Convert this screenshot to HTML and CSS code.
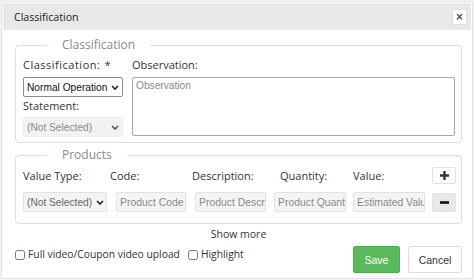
FILE: index.html
```html
<!DOCTYPE html>
<html lang="en">
<head>
  <meta charset="UTF-8">
  <title>Classification</title>
  <link rel="stylesheet" href="styles.css">
</head>
<body>
  <div class="dialog">
    <div class="dialog-header">
      <span class="dialog-title">Classification</span>
      <button class="close-btn">&times;</button>
    </div>
    <div class="dialog-body">
      <fieldset class="group">
        <legend>Classification</legend>
        <div class="class-grid">
          <div class="col-left">
            <label class="lbl lbl-required">Classification:<span class="req">*</span></label>
            <div class="select-wrap">
              <select class="field"><option>Normal Operation</option></select>
              <svg class="chev" width="8" height="5" viewBox="0 0 8 5"><path d="M1 1l3 3 3-3" fill="none" stroke="#222" stroke-width="1.6"/></svg>
            </div>
            <label class="lbl lbl-second">Statement:</label>
            <div class="select-wrap">
              <select class="field" disabled><option>(Not Selected)</option></select>
              <svg class="chev" width="8" height="5" viewBox="0 0 8 5"><path d="M1 1l3 3 3-3" fill="none" stroke="#555" stroke-width="1.6"/></svg>
            </div>
          </div>
          <div class="col-right">
            <label class="lbl">Observation:</label>
            <textarea class="obs" placeholder="Observation"></textarea>
          </div>
        </div>
      </fieldset>

      <fieldset class="group products">
        <legend>Products</legend>
        <div class="prod-grid">
          <span class="lbl">Value Type:</span>
          <span class="lbl">Code:</span>
          <span class="lbl">Description:</span>
          <span class="lbl lbl-qty">Quantity:</span>
          <span class="lbl">Value:</span>
          <button class="icon-btn plus">
            <svg width="9" height="9" viewBox="0 0 9 9"><path d="M4.5 0v9M0 4.5h9" stroke="#333" stroke-width="2.4"/></svg>
          </button>

          <div class="select-wrap type-wrap">
            <select class="field soft"><option>(Not Selected)</option></select>
            <svg class="chev" width="8" height="5" viewBox="0 0 8 5"><path d="M1 1l3 3 3-3" fill="none" stroke="#222" stroke-width="1.6"/></svg>
          </div>
          <input class="field soft in-code" placeholder="Product Code">
          <input class="field soft in-desc" placeholder="Product Description">
          <input class="field soft in-qty" placeholder="Product Quantity">
          <input class="field soft in-val" placeholder="Estimated Value">
          <button class="icon-btn minus">
            <svg width="9" height="9" viewBox="0 0 9 9"><path d="M0 4.5h9" stroke="#111" stroke-width="2.6"/></svg>
          </button>
        </div>
      </fieldset>

      <div class="show-more">Show more</div>

      <div class="footer">
        <label class="check"><input type="checkbox">Full video/Coupon video upload</label>
        <label class="check"><input type="checkbox">Highlight</label>
        <div class="actions">
          <button class="btn save">Save</button>
          <button class="btn cancel">Cancel</button>
        </div>
      </div>
    </div>
  </div>
</body>
</html>
```

FILE: styles.css
```css
body { margin: 0; background: #f4f4f4; font-family: "Open Sans", sans-serif; color: #333; }
.dialog { margin: 1px; height: 278px; box-sizing: border-box; background: #fff; border: 1px solid #e4e4e4; padding: 1px; }

.dialog-header { height: 27px; background: #e8e8e8; display: flex; align-items: center; justify-content: space-between; padding: 0 4px 0 11px; }
.dialog-title { font-size: 10.6px; color: #222; }
.close-btn { width: 15px; height: 16px; margin-top: 1px; padding: 0; background: #fff; border: 1px solid #ddd; border-radius: 2px; font-family: "Liberation Sans", sans-serif; font-size: 12px; font-weight: bold; line-height: 13px; color: #555; }

.dialog-body { padding: 7px 9px 0 12px; }

.group { margin: 0; padding: 4px 6px 5px 7px; border: 1px solid #ddd; border-radius: 4px; min-width: 0; }
.group legend { margin-left: 24px; padding: 0 15px; font-size: 12px; line-height: 16px; color: #8a8a8a; }
.products { margin-top: 4px; padding-bottom: 11px; }

.lbl { display: block; font-size: 11px; line-height: 15px; color: #333; margin-bottom: 5px; }
.lbl-required { letter-spacing: 0.5px; }
.req { margin-left: 4px; }
.lbl-second { margin-top: 1px; margin-bottom: 4px; }

.class-grid { display: grid; grid-template-columns: 100px 1fr; column-gap: 9px; }

.select-wrap { position: relative; }
.chev { position: absolute; right: 4px; top: 8px; pointer-events: none; }

.field { display: block; box-sizing: border-box; height: 20px; width: 100%; margin: 0; padding: 0 0 0 3px; font-family: "Liberation Sans", Arial, sans-serif; font-size: 10.2px; color: #111; background: #fff; border: 1px solid #8c8c8c; border-radius: 2px; appearance: none; -webkit-appearance: none; outline: none; }
.field::placeholder { color: #8a8a8a; }
select.field:disabled { background: #f2f2f2; border-color: #ececec; color: #8a8a8a; opacity: 1; }

.obs { display: block; box-sizing: border-box; width: 100%; height: 59px; margin: 0; padding: 2px 3px; resize: none; font-family: "Liberation Sans", Arial, sans-serif; font-size: 10.2px; border: 1px solid #a8a8a8; border-radius: 2px; }
.obs::placeholder { color: #8a8a8a; }

.prod-grid { display: grid; grid-template-columns: 87px 82px 82px 79px 78px 24px; grid-template-rows: 17px 20px; row-gap: 8px; align-items: center; }
.prod-grid .lbl { margin: 0; }
.prod-grid .lbl-qty { margin-left: 6px; }
.field.soft { background: #f4f4f4; border-color: #e2e2e2; color: #666; }
input.field { font-size: 10.4px; }
.type-wrap { width: 84px; }
.type-wrap .chev { right: 3px; }
.in-code { width: 70px; margin-left: 6px; }
.in-desc { width: 71px; margin-left: 3px; }
.in-qty { width: 72px; }
.in-val { width: 72px; }

.icon-btn { box-sizing: border-box; width: 24px; margin: 0 0 0 1px; padding: 0; border: 1px solid #e0e0e0; border-radius: 2px; display: flex; align-items: center; justify-content: center; }
.plus { height: 17px; background: #fff; }
.minus { height: 19px; background: #e8e8e8; }

.show-more { text-align: center; font-size: 10.5px; line-height: 15px; color: #333; margin-top: 3px; }

.footer { display: flex; align-items: flex-start; }
.check { display: flex; align-items: center; gap: 3px; font-size: 10.3px; line-height: 15px; color: #333; margin-top: 5px; margin-right: 8px; }
.check input { width: 10px; height: 10px; margin: 0; }
.actions { margin-left: auto; margin-top: 4px; display: flex; gap: 8px; }
.btn { height: 27px; padding: 0; font-family: "Liberation Sans", Arial, sans-serif; font-size: 10.5px; border-radius: 2px; }
.save { width: 47px; background: #5cb85c; border: 1px solid #4cae4c; color: #fff; }
.cancel { width: 54px; background: #fff; border: 1px solid #ddd; color: #333; }
```
